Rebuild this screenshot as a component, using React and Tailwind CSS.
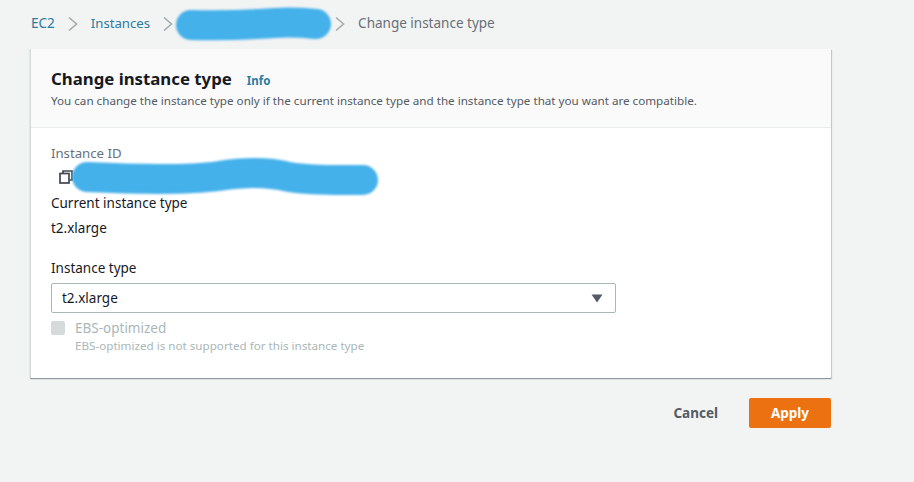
function Chevron() {
  return (
    <svg width="12" height="16" viewBox="0 0 12 16" fill="none" className="shrink-0">
      <path d="M2 1.5 L9.5 8 L2 14.5" stroke="#a5abab" strokeWidth="1.6" />
    </svg>
  );
}

export default function App() {
  return (
    <div className="h-[482px] w-[914px] overflow-hidden bg-[#f2f3f3] pl-[30px] text-[13.5px] text-[#16191f]" style={{ fontFamily: '"Noto Sans", sans-serif' }}>
      <nav className="flex h-[49px] items-center pb-[2px] pl-[1px]">
        <span className="text-[#2b7ca0]">EC2</span>
        <span className="ml-[12px]"><Chevron /></span>
        <span className="ml-[12px] text-[13.2px] text-[#2b7ca0]">Instances</span>
        <span className="ml-[12px]"><Chevron /></span>
        <svg width="158" height="38" viewBox="0 0 158 38" className="-my-2 ml-[1px] shrink-0 blur-[1px]">
          <path d="M16 20 C50 21 70 20 100 18 C115 17 130 18 141 19" stroke="#45b1ea" strokeWidth="30" strokeLinecap="round" fill="none" />
        </svg>
        <span className="ml-[1px]"><Chevron /></span>
        <span className="ml-[12px] text-[#687078]">Change instance type</span>
      </nav>

      <main className="w-[801px] border-l border-l-[#d5dbdb] bg-white shadow-[0_1px_1px_rgba(0,28,36,0.3),1px_1px_1px_rgba(0,28,36,0.15)]">
        <header className="h-[79px] border-b border-[#eaeded] bg-[#fafafa] pl-5 pt-[17px]">
          <div className="flex items-baseline">
            <h1 className="text-[16.8px] leading-[26px] font-bold">Change instance type</h1>
            <a className="ml-[15px] text-[11.5px] font-bold text-[#2b7ca0]">Info</a>
          </div>
          <p className="mt-[1px] text-[11.65px] leading-[16px] text-[#545b64]">You can change the instance type only if the current instance type and the instance type that you want are compatible.</p>
        </header>

        <section className="h-[250px] pl-5 pt-[16px]">
          <div className="text-[13.2px] leading-[18px] text-[#687078]">Instance ID</div>
          <div className="relative flex h-[32px] items-center pb-[2px] pl-[8px]">
            <svg width="14" height="14" viewBox="0 0 14 14" fill="none" stroke="#414750" strokeWidth="1.7" className="shrink-0">
              <rect x="1" y="3.5" width="9" height="9.5" fill="white" />
              <path d="M4 3 V1 H13 V10 H10.5" />
            </svg>
            <svg width="312" height="42" viewBox="0 0 312 42" className="absolute left-[18px] top-[-6px] blur-[1px]">
              <path d="M18 21 C60 23 120 24 150 20 C175 16 200 16 220 21 C245 25 270 24 294 24" stroke="#45b1ea" strokeWidth="30" strokeLinecap="round" fill="none" />
            </svg>
          </div>
          <div className="leading-[18px]">Current instance type</div>
          <div className="mt-[6px] leading-[20px]">t2.xlarge</div>
          <label className="mt-[20px] block leading-[20px]">Instance type</label>
          <div className="mt-[5px] flex h-[30px] w-[565px] items-center justify-between rounded-[2px] border border-[#aab7b8] bg-white pl-[10px] pr-[12px]">
            <span>t2.xlarge</span>
            <svg width="12" height="9" viewBox="0 0 12 9"><path d="M0.5 0.5 H11.5 L6 8.5 Z" fill="#545b64" /></svg>
          </div>
          <div className="mt-[5px] flex">
            <div className="mt-[3px] h-[14px] w-[14px] rounded-[2px] border border-[#d5dbdb] bg-[#d5dbdb]" />
            <div className="ml-[10px]">
              <div className="leading-[20px] text-[#aab7b8]">EBS-optimized</div>
              <div className="text-[11.65px] leading-[16px] text-[#aab7b8]">EBS-optimized is not supported for this instance type</div>
            </div>
          </div>
        </section>
      </main>

      <div className="mt-5 flex w-[801px] items-center justify-end">
        <button className="text-[13.5px] font-bold text-[#545b64]">Cancel</button>
        <button className="ml-[31px] h-[30px] w-[82px] rounded-[2px] bg-[#ec7211] text-[13.5px] font-bold text-white">Apply</button>
      </div>
    </div>
  );
}
